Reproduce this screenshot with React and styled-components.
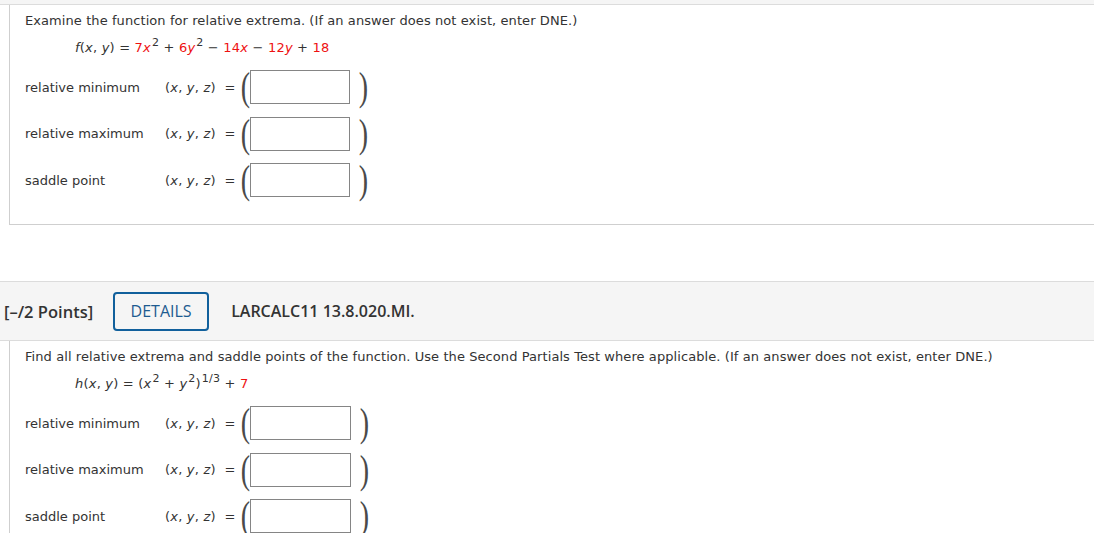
import React from "react";
import styled, { createGlobalStyle } from "styled-components";

const Global = createGlobalStyle`
  html, body { margin: 0; padding: 0; background: #fff; }
  body { font-family: "DejaVu Sans", Verdana, sans-serif; color: #333; }
`;

const TopStrip = styled.div`
  height: 4px;
  background: #f5f5f5;
  border-bottom: 1px solid #dcdcdc;
`;

const QuestionBody = styled.div`
  margin-left: 9px;
  border-left: 1px solid #cfcfcf;
  border-bottom: ${(p) => (p.$closed ? "1px solid #cfcfcf" : "none")};
  padding: 7px 15px ${(p) => (p.$closed ? "27px" : "0")} 15px;
`;

const Prompt = styled.div`
  font-size: 13px;
  line-height: 18px;
  letter-spacing: 0.08px;
  color: #333;
`;

const Formula = styled.div`
  margin: 8px 0 12px 50px;
  font-size: 13px;
  line-height: 20px;
  letter-spacing: 0.2px;
  color: #333;
  white-space: nowrap;
`;

const V = styled.i`
  font-style: italic;
`;

const Red = styled.span`
  color: #ee1111;
`;

const Sup = styled.sup`
  font-size: 11px;
  line-height: 0;
  vertical-align: 6px;
  margin-left: 1px;
`;

const Rows = styled.div`
  display: flex;
  flex-direction: column;
  gap: 12.5px;
`;

const Row = styled.div`
  display: flex;
  align-items: center;
  height: 34px;
`;

const Label = styled.span`
  width: 140px;
  font-size: 13px;
  color: #333;
`;

const Expr = styled.span`
  width: 76px;
  font-size: 13px;
  letter-spacing: 0.2px;
  color: #333;
  white-space: nowrap;
`;

const Paren = styled.span`
  display: inline-flex;
  justify-content: center;
  width: 9px;
  font-family: "Liberation Serif", "Times New Roman", serif;
  font-size: 40px;
  line-height: 34px;
  color: #4a4a4a;
  transform: scaleX(0.7);
`;

const AnswerBox = styled.span`
  box-sizing: border-box;
  display: inline-block;
  width: ${(p) => p.$w}px;
  height: 34px;
  border: 1px solid #858585;
  background: #fff;
  margin: 0 ${(p) => p.$gap}px 0 0;
`;

const Spacer = styled.div`
  height: 56px;
`;

const Header = styled.div`
  display: flex;
  align-items: center;
  gap: 20px;
  height: 58px;
  padding-left: 4px;
  background: #f5f5f5;
  border-top: 1px solid #dcdcdc;
  border-bottom: 1px solid #dcdcdc;
  font-family: "Open Sans", "Noto Sans", sans-serif;
  font-size: 16px;
  color: #333;
`;

const Points = styled.span`
  font-weight: 600;
  font-size: 16.5px;
`;

const DetailsButton = styled.button`
  box-sizing: border-box;
  width: 96px;
  height: 39px;
  border: 2px solid #11609c;
  border-radius: 4px;
  background: #f5f5f5;
  color: #1d5b90;
  font-family: "Open Sans", "Noto Sans", sans-serif;
  font-size: 16px;
  font-weight: 500;
  padding: 0;
  cursor: pointer;
`;

const Code = styled.span`
  font-weight: 600;
  margin-left: 2px;
`;

const XYZ = () => (
  <Expr>
    (<V>x</V>, <V>y</V>, <V>z</V>) &nbsp;=
  </Expr>
);

const AnswerRow = ({ label, w }) => (
  <Row>
    <Label>{label}</Label>
    <XYZ />
    <Paren>(</Paren>
    <AnswerBox $w={w} $gap={9} />
    <Paren>)</Paren>
  </Row>
);

const labels = ["relative minimum", "relative maximum", "saddle point"];

export default function App() {
  return (
    <>
      <Global />
      <TopStrip />
      <QuestionBody $closed>
        <Prompt>
          Examine the function for relative extrema. (If an answer does not exist, enter DNE.)
        </Prompt>
        <Formula>
          <V>f</V>(<V>x</V>, <V>y</V>) = <Red>7<V>x</V></Red><Sup>2</Sup> + <Red>6<V>y</V></Red>
          <Sup>2</Sup> − <Red>14<V>x</V></Red> − <Red>12<V>y</V></Red> + <Red>18</Red>
        </Formula>
        <Rows>
          {labels.map((l) => (
            <AnswerRow key={l} label={l} w={100} />
          ))}
        </Rows>
      </QuestionBody>
      <Spacer />
      <Header>
        <Points>[–/2 Points]</Points>
        <DetailsButton>DETAILS</DetailsButton>
        <Code>LARCALC11 13.8.020.MI.</Code>
      </Header>
      <QuestionBody>
        <Prompt>
          Find all relative extrema and saddle points of the function. Use the Second Partials Test where
          applicable. (If an answer does not exist, enter DNE.)
        </Prompt>
        <Formula>
          <V>h</V>(<V>x</V>, <V>y</V>) = (<V>x</V>
          <Sup>2</Sup> + <V>y</V>
          <Sup>2</Sup>)<Sup>1/3</Sup> + <Red>7</Red>
        </Formula>
        <Rows>
          {labels.map((l) => (
            <AnswerRow key={l} label={l} w={101} />
          ))}
        </Rows>
      </QuestionBody>
    </>
  );
}
